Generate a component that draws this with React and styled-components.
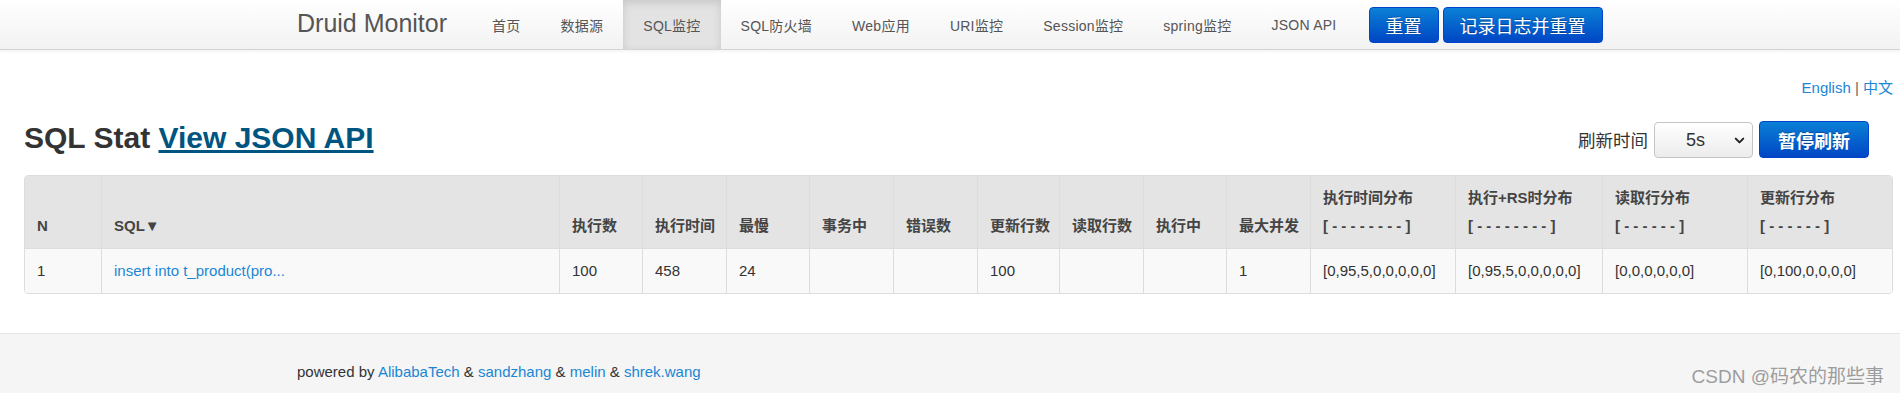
import React from 'react';
import styled, { createGlobalStyle } from 'styled-components';
import { ChevronDown } from 'lucide-react';

const GlobalStyle = createGlobalStyle`
  body {
    margin: 0;
    font-family: "Liberation Sans", Arial, "Noto Sans CJK SC", sans-serif;
    color: #333;
    background: #fff;
  }
`;

const colors = {
  link: '#1a86d4',
  headingLink: '#005580',
  border: '#dddddd',
};

const navItems = ['首页', '数据源', 'SQL监控', 'SQL防火墙', 'Web应用', 'URI监控', 'Session监控', 'spring监控', 'JSON API'];

const columns = [
  { label: 'N', width: 76 },
  { label: 'SQL▼', width: 458 },
  { label: '执行数', width: 83 },
  { label: '执行时间', width: 84 },
  { label: '最慢', width: 83 },
  { label: '事务中', width: 84 },
  { label: '错误数', width: 84 },
  { label: '更新行数', width: 82 },
  { label: '读取行数', width: 84 },
  { label: '执行中', width: 83 },
  { label: '最大并发', width: 84 },
  { label: '执行时间分布', dash: '[ - - - - - - - - ]', width: 145 },
  { label: '执行+RS时分布', dash: '[ - - - - - - - - ]', width: 147 },
  { label: '读取行分布', dash: '[ - - - - - - ]', width: 145 },
  { label: '更新行分布', dash: '[ - - - - - - ]', width: 145 },
];

const row = ['1', 'insert into t_product(pro...', '100', '458', '24', '', '', '100', '', '', '1',
  '[0,95,5,0,0,0,0,0]', '[0,95,5,0,0,0,0,0]', '[0,0,0,0,0,0]', '[0,100,0,0,0,0]'];

const App = () => {
  return (
    <>
      <GlobalStyle />
      <Navbar>
        <NavInner>
          <Brand>Druid Monitor</Brand>
          <NavList>
            {navItems.map((item) => (
              <NavItem key={item} $active={item === 'SQL监控'}>{item}</NavItem>
            ))}
          </NavList>
          <NavButtons>
            <BlueButton>重置</BlueButton>
            <BlueButton>记录日志并重置</BlueButton>
          </NavButtons>
        </NavInner>
      </Navbar>

      <Main>
        <LangBar>
          <a href="#en">English</a> <Sep>|</Sep> <a href="#zh">中文</a>
        </LangBar>

        <TitleRow>
          <Heading>SQL Stat <a href="#json">View JSON API</a></Heading>
          <Refresh>
            <RefreshLabel>刷新时间</RefreshLabel>
            <SelectBox>
              <select defaultValue="5s">
                <option>1s</option>
                <option>5s</option>
                <option>10s</option>
                <option>30s</option>
              </select>
              <Chevron><ChevronDown size={15} strokeWidth={3.2} /></Chevron>
            </SelectBox>
            <PauseButton>暂停刷新</PauseButton>
          </Refresh>
        </TitleRow>

        <TableWrap>
          <Table>
            <colgroup>
              {columns.map((c) => <col key={c.label} style={{ width: c.width }} />)}
            </colgroup>
            <thead>
              <tr>
                {columns.map((c) => (
                  <th key={c.label}>
                    {c.dash ? <>{c.label}<br />{c.dash}</> : c.label}
                  </th>
                ))}
              </tr>
            </thead>
            <tbody>
              <tr>
                {row.map((v, i) => (
                  <td key={i}>{i === 1 ? <a href="#sql">{v}</a> : v}</td>
                ))}
              </tr>
            </tbody>
          </Table>
        </TableWrap>
      </Main>

      <Footer>
        <FooterInner>
          powered by <a href="#ali">AlibabaTech</a> &amp; <a href="#sz">sandzhang</a> &amp; <a href="#melin">melin</a> &amp; <a href="#shrek">shrek.wang</a>
        </FooterInner>
        <Watermark>CSDN @码农的那些事</Watermark>
      </Footer>
    </>
  );
};

const Navbar = styled.div`
  height: 49px;
  background: linear-gradient(to bottom, #ffffff, #f2f2f2);
  border-bottom: 1px solid #d4d4d4;
  box-shadow: 0 1px 4px rgba(0, 0, 0, 0.065);
`;

const NavInner = styled.div`
  width: 1306px;
  margin: 0 auto;
  height: 100%;
  display: flex;
  align-items: stretch;
  white-space: nowrap;
  > * {
    flex-shrink: 0;
  }
`;

const Brand = styled.div`
  display: flex;
  align-items: center;
  font-size: 25px;
  color: #555;
  margin-right: 25px;
  padding-bottom: 2px;
`;

const NavList = styled.div`
  display: flex;
`;

const NavItem = styled.a`
  display: flex;
  align-items: center;
  padding: 0 20px;
  font-size: 14px;
  letter-spacing: 0.25px;
  color: #555;
  text-decoration: none;
  background: ${(p) => (p.$active ? '#e3e3e3' : 'transparent')};
  box-shadow: ${(p) => (p.$active ? 'inset 0 3px 8px rgba(0, 0, 0, 0.125)' : 'none')};
`;

const NavButtons = styled.div`
  display: flex;
  align-items: center;
  gap: 4px;
  margin-left: 12px;
`;

const BlueButton = styled.button`
  height: 36px;
  padding: 0 16px;
  font-family: inherit;
  font-size: 18px;
  white-space: nowrap;
  color: #fff;
  border: 1px solid #0044cc;
  border-radius: 4px;
  background: linear-gradient(to bottom, #0a80d6, #0046c4);
  text-shadow: 0 -1px 0 rgba(0, 0, 0, 0.25);
  cursor: pointer;
`;

const Main = styled.div`
  padding: 0 7px 0 24px;
`;

const LangBar = styled.div`
  margin-top: 28px;
  text-align: right;
  font-size: 15px;
  line-height: 20px;
  a {
    color: ${colors.link};
    text-decoration: none;
  }
`;

const Sep = styled.span`
  color: #666;
`;

const TitleRow = styled.div`
  margin-top: 23px;
  display: flex;
  justify-content: space-between;
  align-items: flex-start;
`;

const Heading = styled.h2`
  margin: 0;
  font-size: 30px;
  line-height: 33px;
  font-weight: bold;
  color: #333;
  a {
    color: ${colors.headingLink};
    text-decoration: underline;
    text-decoration-thickness: 3px;
    text-underline-offset: 2px;
  }
`;

const Refresh = styled.div`
  display: flex;
  align-items: center;
  margin-right: 24px;
  height: 37px;
`;

const RefreshLabel = styled.span`
  font-size: 17.5px;
  color: #333;
  margin-right: 6px;
`;

const SelectBox = styled.div`
  position: relative;
  select {
    appearance: none;
    width: 99px;
    height: 36px;
    padding: 0 0 0 31px;
    font-family: inherit;
    font-size: 18px;
    color: #333;
    border: 1px solid #c4c4c4;
    border-radius: 4px;
    background: linear-gradient(to bottom, #ffffff, #ececec);
    outline: none;
  }
`;

const Chevron = styled.span`
  position: absolute;
  right: 6px;
  top: 11px;
  color: #222;
  pointer-events: none;
  display: flex;
`;

const PauseButton = styled(BlueButton)`
  height: 37px;
  margin-left: 6px;
  padding: 0 18px;
  font-weight: bold;
`;

const TableWrap = styled.div`
  margin-top: 17px;
  border: 1px solid ${colors.border};
  border-radius: 4px;
  overflow: hidden;
`;

const Table = styled.table`
  width: 100%;
  table-layout: fixed;
  border-collapse: separate;
  border-spacing: 0;
  font-size: 15px;

  th, td {
    padding: 8px 12px;
    line-height: 28px;
    text-align: left;
    white-space: nowrap;
    overflow: hidden;
  }
  th + th, td + td {
    border-left: 1px solid ${colors.border};
  }
  th {
    background: #e4e4e4;
    color: #444;
    font-weight: bold;
    vertical-align: bottom;
  }
  td {
    background: #f9f9f9;
    border-top: 1px solid ${colors.border};
    color: #333;
    vertical-align: top;
  }
  td a {
    color: ${colors.link};
    text-decoration: none;
  }
`;

const Footer = styled.div`
  position: relative;
  margin-top: 39px;
  background: #f5f5f5;
  border-top: 1px solid #e5e5e5;
  padding: 28px 0 30px;
`;

const FooterInner = styled.div`
  width: 1306px;
  margin: 0 auto;
  font-size: 15px;
  line-height: 20px;
  color: #333;
  a {
    color: ${colors.link};
    text-decoration: none;
  }
`;

const Watermark = styled.div`
  position: absolute;
  right: 16px;
  top: 32px;
  font-size: 19px;
  line-height: 22px;
  color: #9c9c9c;
  text-shadow: 0 0 1px rgba(255, 255, 255, 0.8);
  pointer-events: none;
`;

export default App;
